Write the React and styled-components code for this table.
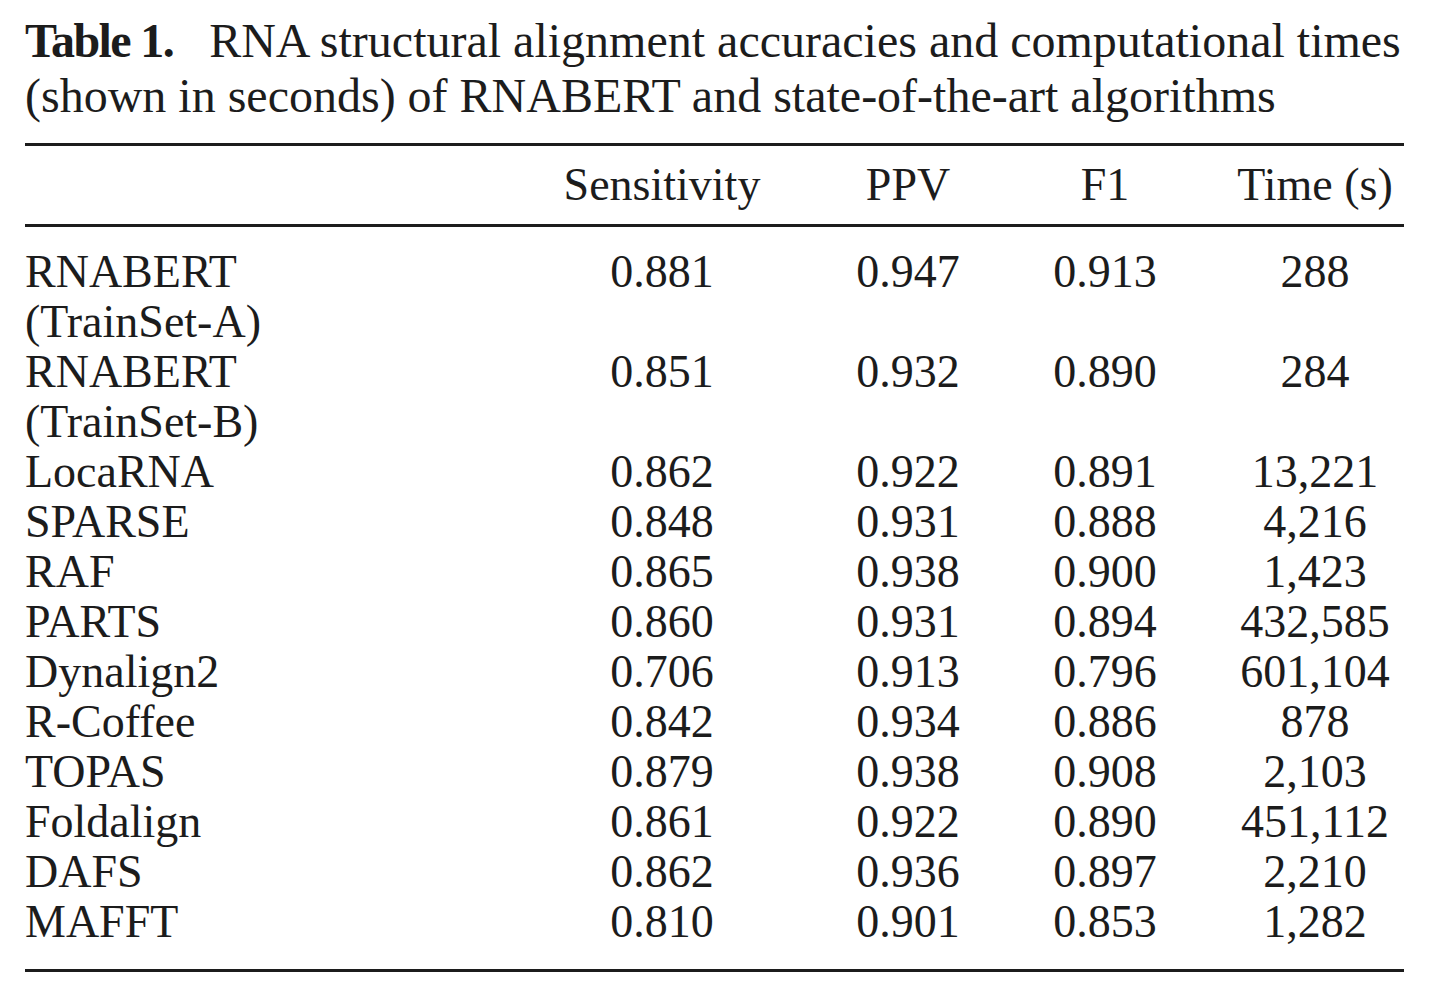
import React from "react";
import styled, { createGlobalStyle } from "styled-components";

const Global = createGlobalStyle`
  html, body { margin: 0; padding: 0; background: #ffffff; }
  body { font-family: "Liberation Serif", "Times New Roman", serif; color: #1c1c1c; }
`;

const Page = styled.div`
  width: 1440px;
  height: 1001px;
  box-sizing: border-box;
  padding: 13px 36px 0 25px;
  background: #fff;
`;

const Caption = styled.div`
  font-size: 48px;
  line-height: 55px;
  margin-bottom: 20px;
`;

const Label = styled.span`
  font-weight: 700;
  letter-spacing: -1.6px;
  margin-right: 36px;
`;

const Table = styled.div`
  border-top: 3px solid #1c1c1c;
  border-bottom: 3px solid #1c1c1c;
`;

const Grid = styled.div`
  display: grid;
  grid-template-columns: 514px 246px 246px 148px 1fr;
  font-size: 46px;
  line-height: 50px;
`;

const Head = styled(Grid)`
  padding: 14px 0 14px;
  border-bottom: 3px solid #1c1c1c;
`;

const Body = styled(Grid)`
  padding: 20px 0 22px;
`;

const Cell = styled.div`
  text-align: ${(p) => (p.$left ? "left" : "center")};
  padding-left: ${(p) => (p.$time ? "47px" : "0")};
  white-space: ${(p) => (p.$left ? "pre" : "nowrap")};
`;

const rows = [
  ["RNABERT\n(TrainSet-A)", "0.881", "0.947", "0.913", "288"],
  ["RNABERT\n(TrainSet-B)", "0.851", "0.932", "0.890", "284"],
  ["LocaRNA", "0.862", "0.922", "0.891", "13,221"],
  ["SPARSE", "0.848", "0.931", "0.888", "4,216"],
  ["RAF", "0.865", "0.938", "0.900", "1,423"],
  ["PARTS", "0.860", "0.931", "0.894", "432,585"],
  ["Dynalign2", "0.706", "0.913", "0.796", "601,104"],
  ["R-Coffee", "0.842", "0.934", "0.886", "878"],
  ["TOPAS", "0.879", "0.938", "0.908", "2,103"],
  ["Foldalign", "0.861", "0.922", "0.890", "451,112"],
  ["DAFS", "0.862", "0.936", "0.897", "2,210"],
  ["MAFFT", "0.810", "0.901", "0.853", "1,282"],
];

export default function App() {
  return (
    <Page>
      <Global />
      <Caption>
        <Label>Table 1.</Label>RNA structural alignment accuracies and computational times
        <br />
        (shown in seconds) of RNABERT and state-of-the-art algorithms
      </Caption>
      <Table>
        <Head>
          <Cell $left></Cell>
          <Cell>Sensitivity</Cell>
          <Cell>PPV</Cell>
          <Cell>F1</Cell>
          <Cell $time>Time (s)</Cell>
        </Head>
        <Body>
          {rows.map((r) => (
            <React.Fragment key={r[0]}>
              <Cell $left>{r[0]}</Cell>
              <Cell>{r[1]}</Cell>
              <Cell>{r[2]}</Cell>
              <Cell>{r[3]}</Cell>
              <Cell $time>{r[4]}</Cell>
            </React.Fragment>
          ))}
        </Body>
      </Table>
    </Page>
  );
}
